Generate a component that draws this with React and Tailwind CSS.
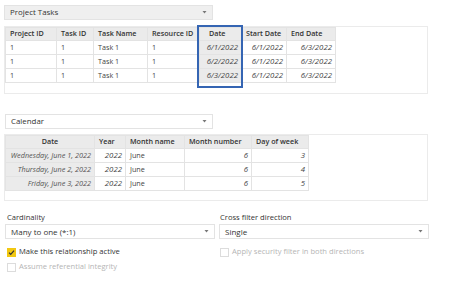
import React from "react";

const font = { fontFamily: '"Open Sans", "Noto Sans", sans-serif' };

function Caret() {
  return (
    <svg width="5" height="3" viewBox="0 0 5 3" className="shrink-0">
      <path d="M0.5 0 L4.5 0 L2.5 2.5 Z" fill="#777" />
    </svg>
  );
}

function Dropdown({ label, w, gray, size = "text-[7.9px]" }) {
  return (
    <div
      className={`h-[15px] flex items-center justify-between pl-[5px] pr-[5px] border border-[#e3e3e3] ${gray ? "bg-[#efefef]" : "bg-white"} ${size} text-[#333]`}
      style={{ width: w }}
    >
      <span>{label}</span>
      <Caret />
    </div>
  );
}

const thBase = "h-[13px] border border-[#e3e3e3] bg-[#ebebeb] text-[7.2px] font-semibold text-[#333] px-[4px] leading-none whitespace-nowrap";
const td = "h-[14px] border border-[#e3e3e3] text-[7.2px] text-[#444] px-[4px] leading-none whitespace-nowrap";

function Table1() {
  const cols = [51, 37, 54, 52, 42, 45, 49];
  const rows = [
    ["1", "1", "Task 1", "1", "6/1/2022", "6/1/2022", "6/3/2022"],
    ["1", "1", "Task 1", "1", "6/2/2022", "6/1/2022", "6/3/2022"],
    ["1", "1", "Task 1", "1", "6/3/2022", "6/1/2022", "6/3/2022"],
  ];
  const heads = ["Project ID", "Task ID", "Task Name", "Resource ID", "Date", "Start Date", "End Date"];
  return (
    <table className="border-collapse table-fixed" style={{ width: 330 }}>
      <colgroup>
        {cols.map((c, i) => (
          <col key={i} style={{ width: c }} />
        ))}
      </colgroup>
      <thead>
        <tr>
          {heads.map((h, i) => (
            <th key={i} className={`${thBase} text-left ${i === 4 ? "pl-[9px]" : ""}`}>{h}</th>
          ))}
        </tr>
      </thead>
      <tbody>
        {rows.map((r, ri) => (
          <tr key={ri}>
            {r.map((c, ci) => (
              <td
                key={ci}
                className={`${td} ${ci >= 4 ? "text-right italic pr-[3px] text-[7.8px]" : ""} ${ci === 4 ? "bg-[#ebebeb]" : ""}`}
              >
                {c}
              </td>
            ))}
          </tr>
        ))}
      </tbody>
    </table>
  );
}

function Table2() {
  const cols = [89, 31, 59, 67, 57];
  const heads = ["Date", "Year", "Month name", "Month number", "Day of week"];
  const rows = [
    ["Wednesday, June 1, 2022", "2022", "June", "6", "3"],
    ["Thursday, June 2, 2022", "2022", "June", "6", "4"],
    ["Friday, June 3, 2022", "2022", "June", "6", "5"],
  ];
  return (
    <table className="border-collapse table-fixed" style={{ width: 303 }}>
      <colgroup>
        {cols.map((c, i) => (
          <col key={i} style={{ width: c }} />
        ))}
      </colgroup>
      <thead>
        <tr>
          {heads.map((h, i) => (
            <th key={i} className={`${thBase} ${i === 0 ? "text-center" : "text-left"}`}>{h}</th>
          ))}
        </tr>
      </thead>
      <tbody>
        {rows.map((r, ri) => (
          <tr key={ri}>
            {r.map((c, ci) => (
              <td
                key={ci}
                className={`${td} ${ci === 2 ? "" : "text-right italic pr-[3px]"} ${ci === 0 ? "bg-[#ebebeb] text-[#555] text-[7.3px]" : ci === 2 ? "" : "text-[7.8px]"}`}
              >
                {c}
              </td>
            ))}
          </tr>
        ))}
      </tbody>
    </table>
  );
}

function Check({ checked, disabled, label }) {
  return (
    <div className="flex items-center gap-[3px] h-[14px]">
      {checked ? (
        <div className="w-[9px] h-[9px] bg-[#f2c811] flex items-center justify-center">
          <svg width="7" height="7" viewBox="0 0 8 8">
            <path d="M1.2 4.2 L3.1 6.1 L6.9 1.8" stroke="#333" strokeWidth="1.4" fill="none" />
          </svg>
        </div>
      ) : (
        <div className="w-[9px] h-[9px] border border-[#dcdcdc] bg-white" />
      )}
      <span className={`text-[7.6px] ${disabled ? "text-[#b5b5b5]" : "text-[#333]"}`}>{label}</span>
    </div>
  );
}

export default function App() {
  return (
    <div className="w-[474px] h-[287px] bg-white relative overflow-hidden" style={font}>
      <div className="pl-[4px] pt-[5px]">
        <Dropdown label="Project Tasks" w={209} gray />
      </div>
      <div className="ml-[4px] mt-[6px] w-[424px] h-[68px] border border-[#ebebeb]">
        <Table1 />
      </div>
      <div className="pl-[5px] mt-[20px]">
        <Dropdown label="Calendar" w={208} />
      </div>
      <div className="ml-[4px] mt-[5px] w-[424px] h-[67px] border border-[#ebebeb]">
        <Table2 />
      </div>
      <div className="flex gap-[4px] pl-[5px] mt-[9px]">
        <div className="flex flex-col">
          <div className="text-[7.6px] text-[#333] pl-[2px] h-[14px] leading-[14px]">Cardinality</div>
          <Dropdown label="Many to one (*:1)" w={210} size="text-[8px]" />
          <div className="pl-[2px] mt-[6px] flex flex-col gap-[1px]">
            <Check checked label="Make this relationship active" />
            <Check disabled label="Assume referential integrity" />
          </div>
        </div>
        <div className="flex flex-col">
          <div className="text-[7.6px] text-[#333] pl-[1px] h-[14px] leading-[14px]">Cross filter direction</div>
          <Dropdown label="Single" w={210} size="text-[8px]" />
          <div className="pl-[1px] mt-[6px]">
            <Check disabled label="Apply security filter in both directions" />
          </div>
        </div>
      </div>
      <div className="absolute left-[197px] top-[25px] w-[46px] h-[63px] border-2 border-[#3565b3]" />
    </div>
  );
}
